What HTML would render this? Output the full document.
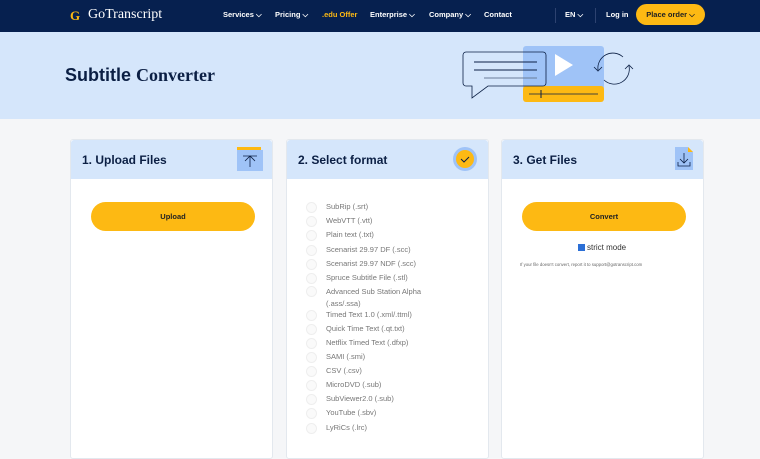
<!DOCTYPE html>
<html><head><meta charset="utf-8"><style>
*{margin:0;padding:0;box-sizing:border-box}
body{width:760px;height:450px;overflow:hidden;background:#f5f6f8;font-family:"Liberation Sans",sans-serif;position:relative}
.nav{position:absolute;left:0;top:0;width:760px;height:32px;background:#06204f;color:#fff}
.nav span{position:absolute;top:10px;font-size:7.5px;font-weight:bold}
.hero{position:absolute;top:32px;left:0;width:760px;height:87px;background:#d5e6fb}
.card{position:absolute;top:139px;width:203px;height:320px;background:#fff;border-radius:3px;border:1px solid #e3e8ee}
.ch{height:39px;background:#d5e6fb;border-radius:3px 3px 0 0;position:relative}
.ch b{position:absolute;left:11px;top:13px;font-size:12px;color:#0b1f44}
.btn{position:absolute;background:#fdb913;border-radius:15px;font-size:7.5px;font-weight:bold;color:#222;text-align:center;line-height:29px}
.r{position:absolute;left:17px;font-size:7.5px;color:#777}
.r:before{content:"";position:absolute;left:-20px;top:0;width:9px;height:9px;border-radius:50%;border:1px solid #eee;background:#fafafa}
</style></head><body>
<div class="nav">
<svg style="position:absolute;left:70px;top:8px" width="13" height="14"><text x="0" y="12" font-size="13" font-weight="bold" fill="#fdb913" font-family="Liberation Serif">G</text></svg>
<span style="left:88px;top:7px;font-size:14px;font-family:'Liberation Serif',serif;font-weight:normal">GoTranscript</span>
<span style="left:223px">Services ⌵</span><span style="left:275px">Pricing ⌵</span>
<span style="left:322px;color:#fdb913">.edu Offer</span><span style="left:370px">Enterprise ⌵</span>
<span style="left:429px">Company ⌵</span><span style="left:484px">Contact</span>
<div style="position:absolute;left:555px;top:8px;width:1px;height:15px;background:#2d4270"></div>
<span style="left:565px">EN ⌵</span>
<div style="position:absolute;left:595px;top:8px;width:1px;height:15px;background:#2d4270"></div>
<span style="left:606px">Log in</span>
<div style="position:absolute;left:636px;top:4px;width:69px;height:21px;border-radius:11px;background:#fdb913;color:#222;font-size:7.5px;font-weight:bold;text-align:center;line-height:21px">Place order ⌵</div>
</div>
<div class="hero">
<div style="position:absolute;left:65px;top:33px;font-size:18px;color:#0b1f44"><b>Subtitle</b> <span style="font-family:'Liberation Serif',serif;font-weight:bold">Converter</span></div>
<svg style="position:absolute;left:460px;top:12px" width="180" height="75">
<rect x="63" y="2" width="81" height="44" rx="3" fill="#9fc3f7"/>
<rect x="63" y="42" width="81" height="16" rx="3" fill="#fdb913"/>
<line x1="69" y1="50" x2="138" y2="50" stroke="#0b1f44" stroke-width="0.8"/><line x1="81" y1="46" x2="81" y2="54" stroke="#0b1f44"/>
<polygon points="95,10 95,32 113,21" fill="#fff"/>
<path d="M6 8h77a3 3 0 0 1 3 3v28a3 3 0 0 1-3 3H28L12 54V42H6a3 3 0 0 1-3-3V11a3 3 0 0 1 3-3z" fill="none" stroke="#0b1f44" stroke-width="0.8"/>
<line x1="14" y1="18" x2="77" y2="18" stroke="#0b1f44"/><line x1="14" y1="26" x2="77" y2="26" stroke="#0b1f44"/><line x1="24" y1="34" x2="77" y2="34" stroke="#6a7c99"/>
<path d="M138 26a15 15 0 0 1 25-13M169 22a15 15 0 0 1-25 14" fill="none" stroke="#0b1f44" stroke-width="0.8"/>
<path d="M134 23l4 4 4-4M165 25l4-4 4 4" fill="none" stroke="#0b1f44" stroke-width="0.8"/>
</svg>
</div>
<div class="card" style="left:70px"><div class="ch"><b>1. Upload Files</b>
<svg style="position:absolute;left:166px;top:7px" width="26" height="24"><rect x="0" y="0" width="24" height="4" fill="#fdb913"/><rect x="0" y="3" width="26" height="21" fill="#9fc3f7"/><path d="M13 9v11M8 14l5-5 5 5M6 9h14" stroke="#0b1f44" fill="none" stroke-width="0.8"/></svg></div>
<div class="btn" style="left:20px;top:62px;width:164px;height:29px">Upload</div></div>
<div class="card" style="left:286px"><div class="ch"><b>2. Select format</b>
<svg style="position:absolute;left:165px;top:6px" width="26" height="26"><circle cx="13" cy="13" r="12" fill="#9fc3f7"/><circle cx="13" cy="13" r="9" fill="#fdb913"/><path d="M9 13l3 3 5-5" stroke="#0b1f44" fill="none"/></svg></div>
<div class="r" style="left:39px;top:62px">SubRip (.srt)</div>
<div class="r" style="left:39px;top:76px">WebVTT (.vtt)</div>
<div class="r" style="left:39px;top:90px">Plain text (.txt)</div>
<div class="r" style="left:39px;top:105px">Scenarist 29.97 DF (.scc)</div>
<div class="r" style="left:39px;top:119px">Scenarist 29.97 NDF (.scc)</div>
<div class="r" style="left:39px;top:133px">Spruce Subtitle File (.stl)</div>
<div class="r" style="left:39px;top:146px;line-height:12px">Advanced Sub Station Alpha<br>(.ass/.ssa)</div>
<div class="r" style="left:39px;top:170px">Timed Text 1.0 (.xml/.ttml)</div>
<div class="r" style="left:39px;top:184px">Quick Time Text (.qt.txt)</div>
<div class="r" style="left:39px;top:198px">Netflix Timed Text (.dfxp)</div>
<div class="r" style="left:39px;top:212px">SAMI (.smi)</div>
<div class="r" style="left:39px;top:226px">CSV (.csv)</div>
<div class="r" style="left:39px;top:240px">MicroDVD (.sub)</div>
<div class="r" style="left:39px;top:254px">SubViewer2.0 (.sub)</div>
<div class="r" style="left:39px;top:268px">YouTube (.sbv)</div>
<div class="r" style="left:39px;top:283px">LyRiCs (.lrc)</div>
</div>
<div class="card" style="left:501px"><div class="ch"><b>3. Get Files</b>
<svg style="position:absolute;left:173px;top:7px" width="18" height="23"><path d="M0 0h13l5 5v18H0z" fill="#9fc3f7"/><path d="M13 0v5h5z" fill="#fdb913"/><path d="M9 6v10M5 12l4 4 4-4M3 15v4h12v-4" stroke="#0b1f44" fill="none" stroke-width="0.8"/></svg></div>
<div class="btn" style="left:20px;top:62px;width:164px;height:29px">Convert</div>
<div style="position:absolute;left:76px;top:103px;font-size:8px;color:#333"><span style="display:inline-block;width:7px;height:7px;background:#2b6fd6;vertical-align:-1px;margin-right:2px"></span>strict mode</div>
<div style="position:absolute;left:18px;top:122px;font-size:4.3px;color:#666">If your file doesn't convert, report it to support@gotranscript.com</div>
</div>
</body></html>
